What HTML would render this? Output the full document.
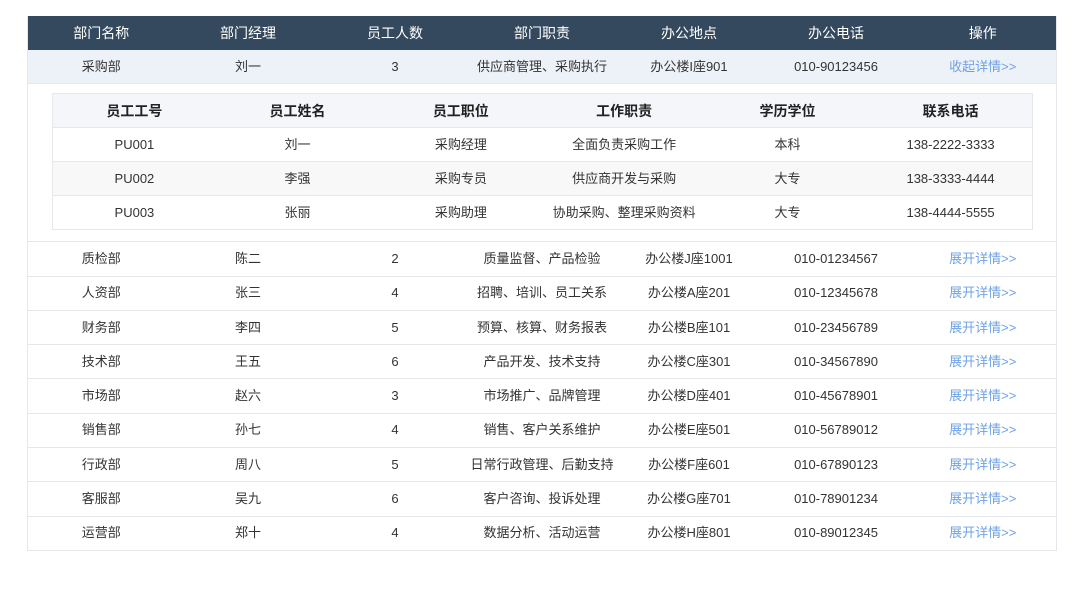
<!DOCTYPE html>
<html><head><meta charset="utf-8"><style>
body{margin:0;background:#fff;font-family:"Liberation Sans","Noto Sans CJK SC",sans-serif;font-size:13px;line-height:16px;color:#333}
.wrap{position:absolute;left:27px;top:16px;width:1030px}
table{border-collapse:collapse;width:100%;table-layout:fixed}
td,th{padding:0;line-height:16px}
.main>tbody>tr>td{height:33.3px;text-align:center;border-bottom:1px solid #e4e7ec}
.main>thead>tr>th{height:34px;background:#34495e;color:#fff;font-weight:normal;font-size:14px}
.main{border-left:1px solid #e4e7ec;border-right:1px solid #e4e7ec}
.sel td{background:#edf2f9}
a{color:#6ea2e8;text-decoration:none}
.inner{width:981px;margin:9px 0 11px 24px;border:1px solid #e4e7ec}
.inner th{background:#f4f6f9;color:#222;font-weight:bold;height:33px;font-size:14px}
.inner td{height:33px;text-align:center;border-top:1px solid #e4e7ec}
.inner tr.alt td{background:#f8f8f8}
</style></head><body>
<div class="wrap">
<table class="main">
<thead><tr><th>部门名称</th><th>部门经理</th><th>员工人数</th><th>部门职责</th><th>办公地点</th><th>办公电话</th><th>操作</th></tr></thead>
<tbody>
<tr class="sel"><td>采购部</td><td>刘一</td><td>3</td><td>供应商管理、采购执行</td><td>办公楼I座901</td><td>010-90123456</td><td><a>收起详情&gt;&gt;</a></td></tr>
<tr><td colspan="7" style="height:auto;padding:0">
<table class="inner">
<tr><th>员工工号</th><th>员工姓名</th><th>员工职位</th><th>工作职责</th><th>学历学位</th><th>联系电话</th></tr>
<tr><td>PU001</td><td>刘一</td><td>采购经理</td><td>全面负责采购工作</td><td>本科</td><td>138-2222-3333</td></tr>
<tr class="alt"><td>PU002</td><td>李强</td><td>采购专员</td><td>供应商开发与采购</td><td>大专</td><td>138-3333-4444</td></tr>
<tr><td>PU003</td><td>张丽</td><td>采购助理</td><td>协助采购、整理采购资料</td><td>大专</td><td>138-4444-5555</td></tr>
</table></td></tr>
<tr><td>质检部</td><td>陈二</td><td>2</td><td>质量监督、产品检验</td><td>办公楼J座1001</td><td>010-01234567</td><td><a>展开详情&gt;&gt;</a></td></tr>
<tr><td>人资部</td><td>张三</td><td>4</td><td>招聘、培训、员工关系</td><td>办公楼A座201</td><td>010-12345678</td><td><a>展开详情&gt;&gt;</a></td></tr>
<tr><td>财务部</td><td>李四</td><td>5</td><td>预算、核算、财务报表</td><td>办公楼B座101</td><td>010-23456789</td><td><a>展开详情&gt;&gt;</a></td></tr>
<tr><td>技术部</td><td>王五</td><td>6</td><td>产品开发、技术支持</td><td>办公楼C座301</td><td>010-34567890</td><td><a>展开详情&gt;&gt;</a></td></tr>
<tr><td>市场部</td><td>赵六</td><td>3</td><td>市场推广、品牌管理</td><td>办公楼D座401</td><td>010-45678901</td><td><a>展开详情&gt;&gt;</a></td></tr>
<tr><td>销售部</td><td>孙七</td><td>4</td><td>销售、客户关系维护</td><td>办公楼E座501</td><td>010-56789012</td><td><a>展开详情&gt;&gt;</a></td></tr>
<tr><td>行政部</td><td>周八</td><td>5</td><td>日常行政管理、后勤支持</td><td>办公楼F座601</td><td>010-67890123</td><td><a>展开详情&gt;&gt;</a></td></tr>
<tr><td>客服部</td><td>吴九</td><td>6</td><td>客户咨询、投诉处理</td><td>办公楼G座701</td><td>010-78901234</td><td><a>展开详情&gt;&gt;</a></td></tr>
<tr><td>运营部</td><td>郑十</td><td>4</td><td>数据分析、活动运营</td><td>办公楼H座801</td><td>010-89012345</td><td><a>展开详情&gt;&gt;</a></td></tr>
</tbody></table>
</div>
</body></html>
